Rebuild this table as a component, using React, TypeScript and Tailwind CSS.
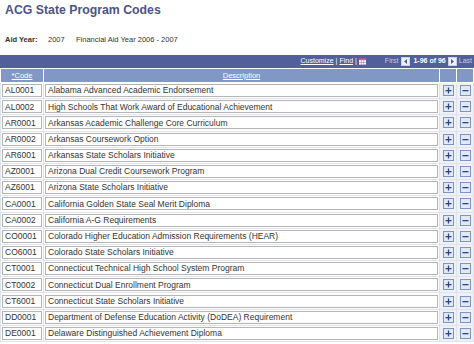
import React from "react";

const rows: [string, string][] = [
  ["AL0001", "Alabama Advanced Academic Endorsement"],
  ["AL0002", "High Schools That Work Award of Educational Achievement"],
  ["AR0001", "Arkansas Academic Challenge Core Curriculum"],
  ["AR0002", "Arkansas Coursework Option"],
  ["AR6001", "Arkansas State Scholars Initiative"],
  ["AZ0001", "Arizona Dual Credit Coursework Program"],
  ["AZ6001", "Arizona State Scholars Initiative"],
  ["CA0001", "California Golden State Seal Merit Diploma"],
  ["CA0002", "California A-G Requirements"],
  ["CO0001", "Colorado Higher Education Admission Requirements (HEAR)"],
  ["CO6001", "Colorado State Scholars Initiative"],
  ["CT0001", "Connecticut Technical High School System Program"],
  ["CT0002", "Connecticut Dual Enrollment Program"],
  ["CT6001", "Connecticut State Scholars Initiative"],
  ["DD0001", "Department of Defense Education Activity (DoDEA) Requirement"],
  ["DE0001", "Delaware Distinguished Achievement Diploma"],
];

function RowButton({ minus }: { minus?: boolean }) {
  return (
    <span className="inline-flex h-[11px] w-[11px] items-center justify-center border border-[#7e93bf] bg-[#e3e9f4]">
      <svg width="7" height="7" viewBox="0 0 7 7">
        <rect x="0.5" y="3" width="6" height="1.3" fill="#2f457f" />
        {!minus && <rect x="2.85" y="0.5" width="1.3" height="6" fill="#2f457f" />}
      </svg>
    </span>
  );
}

function NavArrow({ right }: { right?: boolean }) {
  return (
    <span className="inline-flex h-[9px] w-[9px] items-center justify-center border border-[#c8d0e4] bg-[#eef1f8]">
      <svg width="5" height="5" viewBox="0 0 5 5">
        {right ? <path d="M1 0 L4 2.5 L1 5 Z" fill="#4d5f94" /> : <path d="M4 0 L1 2.5 L4 5 Z" fill="#4d5f94" />}
      </svg>
    </span>
  );
}

export default function App() {
  return (
    <div className="h-[344px] w-[474px] overflow-hidden bg-white font-['Liberation_Sans',Arial,sans-serif]">
      {/* page title */}
      <h1 className="pl-[5px] pt-[3px] text-[12.3px] font-bold leading-[15px] text-[#4b5486]">ACG State Program Codes</h1>

      {/* aid year */}
      <div className="mt-[16px] flex h-[12px] items-center text-[7.5px] text-[#333]">
        <span className="w-[48px] pl-[5px] font-bold">Aid Year:</span>
        <span className="w-[28px]">2007</span>
        <span>Financial Aid Year 2006 - 2007</span>
      </div>

      {/* grid */}
      <div className="mt-[9px]">
        <div className="flex h-[13px] items-center justify-end bg-[#51609a] pr-[2px] text-[7px] text-white">
          <span className="underline">Customize</span>
          <span className="mx-[2px]">|</span>
          <span className="underline">Find</span>
          <span className="mx-[2px]">|</span>
          <svg width="7" height="7" viewBox="0 0 8 7" className="mr-[19px]">
            <rect x="0" y="0" width="8" height="2" fill="#e05a8a" />
            <rect x="0" y="2" width="8" height="5" fill="#ffffff" />
            <path d="M0 4.5 H8 M2.7 2 V7 M5.3 2 V7" stroke="#7c8cc0" strokeWidth="0.7" />
          </svg>
          <span className="mr-[3px] text-[#c3cbe2]">First</span>
          <NavArrow />
          <span className="ml-[3px] mr-[2px] font-bold">1-96 of 96</span>
          <NavArrow right />
          <span className="ml-[2px] text-[#c3cbe2]">Last</span>
        </div>

        <table className="w-[474px] table-fixed border-collapse text-[8.5px] text-[#333]">
          <colgroup>
            <col className="w-[43px]" />
            <col />
            <col className="w-[17px]" />
            <col className="w-[17px]" />
          </colgroup>
          <thead>
            <tr className="h-[14px] bg-[#8197c4]">
              <th className="border border-white py-0 text-[7.5px] font-normal text-white underline">*Code</th>
              <th className="border border-white py-0 text-[7.5px] font-normal text-white underline">Description</th>
              <th className="border border-white"></th>
              <th className="border border-white"></th>
            </tr>
          </thead>
          <tbody>
            {rows.map(([code, desc]) => (
              <tr key={code} className="h-[16.2px]">
                <td className="border border-[#dfe3ec] px-[1px] py-0">
                  <div className="flex h-[13px] items-center border border-[#b4b4b4] bg-white pl-[2px] leading-none">
                    {code}
                  </div>
                </td>
                <td className="border border-[#dfe3ec] px-[1px] py-0">
                  <div className="flex h-[13px] items-center border border-[#b4b4b4] bg-white pl-[2px] leading-none">
                    {desc}
                  </div>
                </td>
                <td className="border border-[#dfe3ec] bg-[#eef1f7] p-0 text-center leading-none">
                  <RowButton />
                </td>
                <td className="border border-[#dfe3ec] bg-[#eef1f7] p-0 text-center leading-none">
                  <RowButton minus />
                </td>
              </tr>
            ))}
          </tbody>
        </table>
      </div>
    </div>
  );
}
